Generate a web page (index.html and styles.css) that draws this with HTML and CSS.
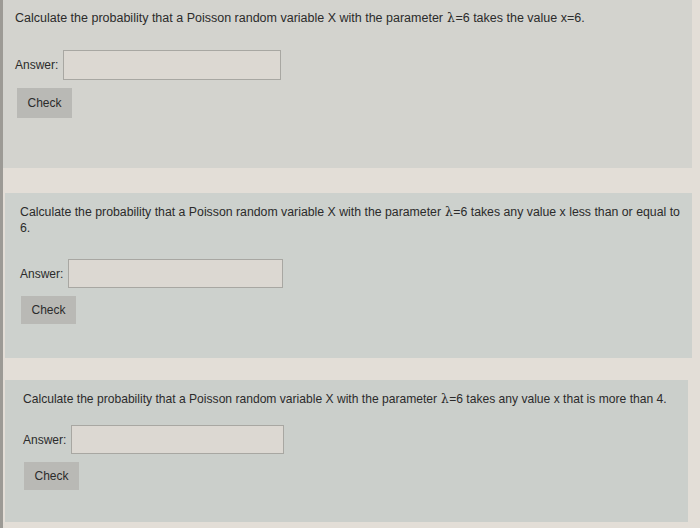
FILE: index.html
```html
<!DOCTYPE html>
<html>
<head>
<meta charset="utf-8">
<link rel="stylesheet" href="styles.css">
</head>
<body>
<div class="page">
  <section class="panel q1">
    <p class="question">Calculate the probability that a Poisson random variable X with the parameter <span class="lam">λ</span>=6 takes the value x=6.</p>
    <div class="answer-row">
      <label class="label">Answer:</label>
      <div class="input"></div>
    </div>
    <div class="btn">Check</div>
  </section>
  <section class="panel q2">
    <p class="question">Calculate the probability that a Poisson random variable X with the parameter <span class="lam">λ</span>=6 takes any value x less than or equal to<br>6.</p>
    <div class="answer-row">
      <label class="label">Answer:</label>
      <div class="input"></div>
    </div>
    <div class="btn">Check</div>
  </section>
  <section class="panel q3">
    <p class="question">Calculate the probability that a Poisson random variable X with the parameter <span class="lam">λ</span>=6 takes any value x that is more than 4.</p>
    <div class="answer-row">
      <label class="label">Answer:</label>
      <div class="input"></div>
    </div>
    <div class="btn">Check</div>
  </section>
</div>
</body>
</html>
```
FILE: styles.css
```css
html, body {
  margin: 0;
  padding: 0;
}
body {
  width: 700px;
  height: 528px;
  overflow: hidden;
  background: #e3ded7;
  font-family: "Liberation Sans", Arial, sans-serif;
  color: #2b2b2b;
}
.page {
  display: flex;
  flex-direction: column;
  border-left: 3px solid #9c9a95;
  height: 528px;
  box-sizing: border-box;
}
.panel {
  box-sizing: border-box;
  display: flex;
  flex-direction: column;
  align-items: flex-start;
}
.q1 {
  height: 168px;
  background: #d3d3ce;
  padding: 10px 12px 0 12px;
  margin-right: 8px;
}
.q2 {
  margin-top: 25px;
  height: 165px;
  background: #cdd1cd;
  padding: 11px 6px 0 15px;
  margin-left: 2px;
  margin-right: 8px;
}
.q3 {
  margin-top: 22px;
  height: 142px;
  background: #cbcfcb;
  padding: 11px 2px 0 18px;
  margin-left: 2px;
  margin-right: 12px;
}
.question {
  margin: 0;
  font-size: 12.5px;
  line-height: 16px;
}
.q2 .question {
  font-size: 12.3px;
}
.q3 .question {
  font-size: 12.1px;
}
.lam {
  font-family: "DejaVu Serif", serif;
  padding: 0 0.5px;
}
.answer-row {
  display: flex;
  align-items: center;
  margin-top: 24px;
  gap: 5px;
}
.q2 .answer-row {
  margin-top: 23px;
}
.q3 .answer-row {
  margin-top: 18px;
}
.label {
  font-size: 12px;
}
.input {
  width: 216px;
  height: 28px;
  background: #dcd8d2;
  border: 1px solid #a8a7a2;
}
.q2 .input {
  width: 213px;
  height: 27px;
}
.q3 .input {
  width: 211px;
  height: 27px;
}
.btn {
  margin-top: 8px;
  margin-left: 2px;
  width: 55px;
  height: 30px;
  background: #b9b9b5;
  font-size: 12px;
  display: flex;
  align-items: center;
  justify-content: center;
}
.q2 .btn, .q3 .btn {
  margin-left: 1px;
  height: 28px;
}
```
